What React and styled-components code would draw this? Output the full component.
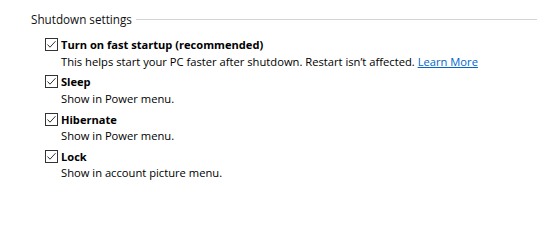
import React from "react";
import styled, { createGlobalStyle } from "styled-components";

const GlobalStyle = createGlobalStyle`
  body {
    margin: 0;
    background: #ffffff;
    font-family: "Segoe UI", "Open Sans", "Noto Sans", sans-serif;
    color: #000000;
  }
`;

const Page = styled.div`
  padding: 11px 0 0 31px;
  height: 250px;
  box-sizing: border-box;
`;

const GroupHeader = styled.div`
  display: flex;
  align-items: center;
  gap: 4px;
  font-size: 11.7px;
  line-height: 16px;
  color: #111111;
`;

const Rule = styled.div`
  flex: 1;
  height: 1px;
  background: #d4d4d4;
`;

const Options = styled.div`
  padding: 7.5px 0 0 14px;
`;

const Option = styled.div`
  padding-bottom: 0.33px;
`;

const OptionRow = styled.label`
  display: flex;
  align-items: center;
  gap: 3px;
  height: 20px;
  font-size: 11.1px;
  font-weight: 700;
`;

const Box = styled.span`
  width: 13px;
  height: 13px;
  box-sizing: border-box;
  border: 1px solid #333333;
  background: #ffffff;
  display: flex;
  align-items: center;
  justify-content: center;
`;

const Description = styled.div`
  padding-left: 16px;
  height: 17px;
  line-height: 14px;
  font-size: 11.2px;
`;

const Link = styled.a`
  color: #0066cc;
  text-decoration: underline;
`;

const Check = () => (
  <svg width="11" height="11" viewBox="0 0 11 11">
    <path d="M1.5 5.5 L4 8.2 L9.5 2.2" fill="none" stroke="#333" strokeWidth="1" />
  </svg>
);

const options = [
  {
    label: "Turn on fast startup (recommended)",
    desc: "This helps start your PC faster after shutdown. Restart isn’t affected.",
    link: "Learn More",
  },
  { label: "Sleep", desc: "Show in Power menu." },
  { label: "Hibernate", desc: "Show in Power menu." },
  { label: "Lock", desc: "Show in account picture menu." },
];

export default function App() {
  return (
    <>
      <GlobalStyle />
      <Page>
        <GroupHeader>
          <span>Shutdown settings</span>
          <Rule />
        </GroupHeader>
        <Options>
          {options.map((opt) => (
            <Option key={opt.label}>
              <OptionRow>
                <Box>
                  <Check />
                </Box>
                <span>{opt.label}</span>
              </OptionRow>
              <Description>
                {opt.desc}
                {opt.link && (
                  <>
                    {" "}
                    <Link href="#">{opt.link}</Link>
                  </>
                )}
              </Description>
            </Option>
          ))}
        </Options>
      </Page>
    </>
  );
}
